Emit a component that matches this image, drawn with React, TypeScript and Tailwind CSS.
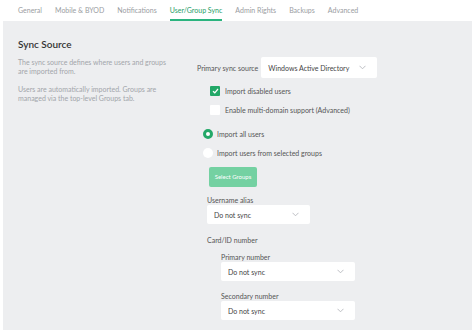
const tabs = ["General", "Mobile & BYOD", "Notifications", "User/Group Sync", "Admin Rights", "Backups", "Advanced"];

function Chevron() {
  return (
    <svg width="7" height="5" viewBox="0 0 7 5" className="shrink-0">
      <path d="M0.5 0.8 L3.5 3.8 L6.5 0.8" fill="none" stroke="#b5b8bd" strokeWidth="0.9" />
    </svg>
  );
}

function Select({ value, className }: { value: string; className: string }) {
  return (
    <div className={`flex items-center justify-between bg-white rounded-[2px] pl-[7px] pr-[11px] text-[#444] ${className}`}>
      <span>{value}</span>
      <Chevron />
    </div>
  );
}

function Checkbox({ checked, label }: { checked: boolean; label: string }) {
  return (
    <div className="flex items-center gap-[5px] ml-[13px]">
      {checked ? (
        <span className="w-[10px] h-[10px] rounded-[1px] bg-[#23a868] flex items-center justify-center">
          <svg width="7" height="6" viewBox="0 0 7 6">
            <path d="M1 3.2 L2.8 4.8 L6 1" fill="none" stroke="white" strokeWidth="1.2" />
          </svg>
        </span>
      ) : (
        <span className="w-[10px] h-[10px] rounded-[1px] bg-white" />
      )}
      <span className="text-[#555]">{label}</span>
    </div>
  );
}

function Radio({ checked, label }: { checked: boolean; label: string }) {
  return (
    <div className="flex items-center gap-[4px] ml-[6px]">
      {checked ? (
        <span className="w-[10px] h-[10px] rounded-full border-[3px] border-[#23a868] bg-white" />
      ) : (
        <span className="w-[10px] h-[10px] rounded-full bg-white" />
      )}
      <span className="text-[#555]">{label}</span>
    </div>
  );
}

export default function App() {
  return (
    <div className="w-[474px] h-[331px] bg-white overflow-hidden text-[7px] leading-[8px]" style={{ fontFamily: "Lato, 'Open Sans', sans-serif" }}>
      <nav className="h-[21px] flex items-start gap-[13px] pl-[18px]">
        {tabs.map((t) => (
          <div
            key={t}
            className={
              t === "User/Group Sync"
                ? "h-[21px] pt-[6px] text-[#1f9e68] border-b-2 border-[#2bb47f]"
                : "h-[21px] pt-[6px] text-[#9a9da2]"
            }
          >
            {t}
          </div>
        ))}
      </nav>
      <div className="ml-[3px] w-[469px] h-[309px] bg-[#edeef0] flex">
        <div className="w-[180px] pl-[15px] pt-[18px]">
          <h2 className="text-[10px] leading-[11px] font-semibold text-[#333]">Sync Source</h2>
          <p className="mt-[8px] w-[150px] text-[#a2a5aa] leading-[9px]">
            The sync source defines where users and groups are imported from.
          </p>
          <p className="mt-[9px] w-[150px] text-[#a2a5aa] leading-[9px]">
            Users are automatically imported. Groups are managed via the top-level Groups tab.
          </p>
        </div>
        <div className="flex-1 pl-[14px] pt-[36px]">
          <div className="flex items-center gap-[3px]">
            <span className="text-[#555]">Primary sync source</span>
            <Select value="Windows Active Directory" className="w-[116px] h-[21px]" />
          </div>
          <div className="mt-[8px] flex flex-col gap-[9px]">
            <Checkbox checked label="Import disabled users" />
            <Checkbox checked={false} label="Enable multi-domain support (Advanced)" />
          </div>
          <div className="mt-[14px] flex flex-col gap-[9px]">
            <Radio checked label="Import all users" />
            <Radio checked={false} label="Import users from selected groups" />
          </div>
          <button className="mt-[9px] ml-[12px] w-[48px] h-[20px] rounded-[2px] bg-[#74d1a2] text-white text-[6px]">
            Select Groups
          </button>
          <div className="ml-[10px] mt-[9px]">
            <div className="text-[#555]">Username alias</div>
            <Select value="Do not sync" className="mt-[1px] w-[103px] h-[19px]" />
            <div className="mt-[12px] text-[#555]">Card/ID number</div>
            <div className="ml-[14px] mt-[9px]">
              <div className="text-[#555]">Primary number</div>
              <Select value="Do not sync" className="mt-[1px] w-[134px] h-[19px]" />
              <div className="mt-[11px] text-[#555]">Secondary number</div>
              <Select value="Do not sync" className="mt-[1px] w-[134px] h-[19px]" />
            </div>
          </div>
        </div>
      </div>
    </div>
  );
}
